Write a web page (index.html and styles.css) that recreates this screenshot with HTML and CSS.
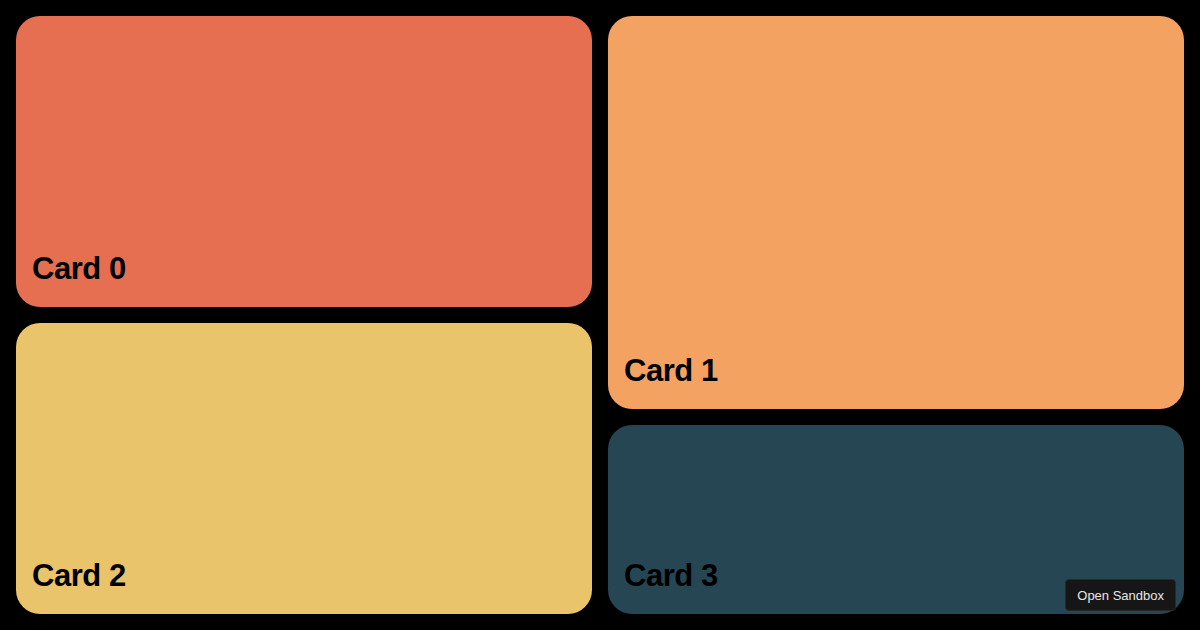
FILE: index.html
```html
<!DOCTYPE html>
<html>
<head>
<meta charset="utf-8">
<link rel="stylesheet" href="styles.css">
</head>
<body>
<main class="grid">
  <div class="column">
    <div class="card card-0"><h2 class="title">Card 0</h2></div>
    <div class="card card-2"><h2 class="title">Card 2</h2></div>
  </div>
  <div class="column">
    <div class="card card-1 tall"><h2 class="title">Card 1</h2></div>
    <div class="card card-3"><h2 class="title">Card 3</h2></div>
  </div>
</main>
<button class="sandbox">Open Sandbox</button>
</body>
</html>
```

FILE: styles.css
```css
* { box-sizing: border-box; }
html, body { margin: 0; height: 100%; }
body {
  background: #000;
  font-family: "Liberation Sans", Arial, sans-serif;
  padding: 16px;
}
.grid {
  display: grid;
  grid-template-columns: 1fr 1fr;
  gap: 16px;
  height: 100%;
}
.column {
  display: flex;
  flex-direction: column;
  gap: 16px;
}
.card {
  flex: 1;
  border-radius: 24px;
  padding: 16px;
  display: flex;
  align-items: flex-end;
}
.card.tall { flex: 0 0 393px; }
.card-0 { background: #e76f51; }
.card-1 { background: #f4a261; }
.card-2 { background: #e9c46a; }
.card-3 { background: #264653; }
.title {
  margin: 0;
  font-size: 31px;
  font-weight: 700;
  letter-spacing: -0.45px;
  line-height: 1.2;
  color: #000;
  padding-bottom: 4px;
}
.sandbox {
  position: fixed;
  right: 24px;
  bottom: 19px;
  height: 32px;
  padding: 0 11px;
  background: #161616;
  color: #e6e6e6;
  border: 1px solid #2a2a2a;
  border-radius: 4px;
  font-family: "Liberation Sans", Arial, sans-serif;
  font-size: 13px;
}
```
